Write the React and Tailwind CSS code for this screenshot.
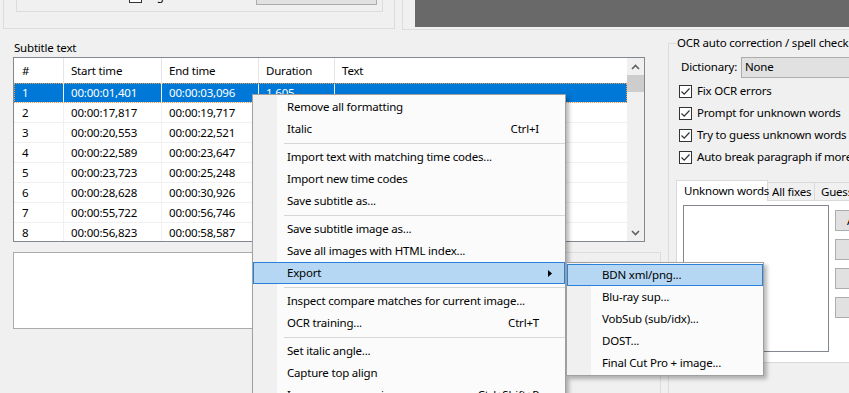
import React from "react";

const rows = [
  ["1", "00:00:01,401", "00:00:03,096", "1,605"],
  ["2", "00:00:17,817", "00:00:19,717", "1,900"],
  ["3", "00:00:20,553", "00:00:22,521", "1,968"],
  ["4", "00:00:22,589", "00:00:23,647", "1,058"],
  ["5", "00:00:23,723", "00:00:25,248", "1,525"],
  ["6", "00:00:28,628", "00:00:30,926", "2,298"],
  ["7", "00:00:55,722", "00:00:56,746", "1,024"],
  ["8", "00:00:56,823", "00:00:58,587", "1,764"],
];

const menu = [
  { label: "Remove all formatting" },
  { label: "Italic", key: "Ctrl+I" },
  { sep: true },
  { label: "Import text with matching time codes..." },
  { label: "Import new time codes" },
  { label: "Save subtitle as..." },
  { sep: true },
  { label: "Save subtitle image as..." },
  { label: "Save all images with HTML index..." },
  { label: "Export", sub: true, active: true },
  { sep: true },
  { label: "Inspect compare matches for current image..." },
  { label: "OCR training...", key: "Ctrl+T" },
  { sep: true },
  { label: "Set italic angle..." },
  { label: "Capture top align" },
  { label: "Image preprocessing...", key: "Ctrl+Shift+P" },
];

const exportMenu = [
  "BDN xml/png...",
  "Blu-ray sup...",
  "VobSub (sub/idx)...",
  "DOST...",
  "Final Cut Pro + image...",
];

const checks = [
  "Fix OCR errors",
  "Prompt for unknown words",
  "Try to guess unknown words",
  "Auto break paragraph if more than two lines",
];

function Check() {
  return (
    <div className="w-[13px] h-[13px] shrink-0 border border-[#333] bg-white flex items-center justify-center">
      <svg width="11" height="11" viewBox="0 0 11 11">
        <path d="M1.5 5.5 L4.2 8.2 L9.5 2.5" fill="none" stroke="#333" strokeWidth="1.2" />
      </svg>
    </div>
  );
}

function Chevron({ down }) {
  return (
    <div className="h-[17px] flex items-center justify-center">
      <svg width="9" height="6" viewBox="0 0 9 6">
        <path
          d={down ? "M1 1 L4.5 4.5 L8 1" : "M1 5 L4.5 1.5 L8 5"}
          fill="none"
          stroke="#606060"
          strokeWidth="1.6"
        />
      </svg>
    </div>
  );
}

export default function App() {
  const cols = ["w-[50px] pl-[8px]", "w-[98px] pl-[7px]", "w-[97px] pl-[7px]", "w-[76px] pl-[7px]"];

  return (
    <div className="relative w-[849px] h-[393px] overflow-hidden bg-[#f0f0f0] font-['Noto_Sans',sans-serif] text-[11.5px] tracking-[-0.2px] leading-[16px] text-black">
      {/* top strip, cut off */}
      <div className="flex h-[30px]">
        <div className="ml-[3px] w-[392px] h-[29px] shrink-0 border-x border-b border-[#dcdcdc]">
          <div className="ml-[12px] w-[367px] h-[12px] border-x border-b border-[#dcdcdc] flex items-end overflow-hidden">
            <div className="ml-[112px] mb-[8px] w-[13px] h-[13px] shrink-0 border border-[#333] bg-white" />
            <div className="ml-[5px] mb-[7px] whitespace-nowrap">Right to left</div>
            <div className="ml-auto mr-[5px] mb-[6px] w-[121px] h-[23px] shrink-0 border border-[#adadad] bg-[#e1e1e1]" />
          </div>
        </div>
        <div className="ml-[7px] flex-1 h-[30px] border-l border-b border-[#dcdcdc] pl-[12px]">
          <div className="h-[27px] bg-[#696969]" />
        </div>
      </div>

      <div className="flex">
        {/* left column */}
        <div className="w-[661px] shrink-0 pl-[13px]">
          <div className="mt-[10px] h-[17px] pl-[1px]">Subtitle text</div>
          <div className="w-[632px] h-[185px] border border-[#828790] bg-white flex">
            <div className="flex-1 overflow-hidden">
              <div className="flex h-[25px] items-center">
                {["#", "Start time", "End time", "Duration"].map((h, i) => (
                  <div key={h} className={`${cols[i]} h-full flex items-center border-r border-[#e5e5e5] shrink-0`}>
                    {h}
                  </div>
                ))}
                <div className="flex-1 pl-[7px]">Text</div>
              </div>
              {rows.map((r, idx) => {
                const sel = idx === 0;
                return (
                  <div
                    key={r[0]}
                    className={`flex h-[20px] border-b border-[#f0f0f0] ${
                      sel ? "bg-[#0078d7] text-white outline-1 outline-dotted outline-[#e9a15a] -outline-offset-1" : ""
                    }`}
                  >
                    {r.map((c, i) => (
                      <div key={i} className={`${cols[i]} h-full flex items-center border-r border-[#f0f0f0] shrink-0 whitespace-nowrap`}>
                        {c}
                      </div>
                    ))}
                    <div className="flex-1" />
                  </div>
                );
              })}
            </div>
            <div className="w-[17px] shrink-0 bg-[#f0f0f0] flex flex-col">
              <Chevron />
              <div className="h-[17px] bg-[#cdcdcd]" />
              <div className="flex-1" />
              <Chevron down />
            </div>
          </div>
          <div className="mt-[10px] flex">
            <div className="w-[330px] h-[77px] border border-[#ababab] bg-white" />
            <div className="flex-1 h-[150px] border-t border-r border-[#dcdcdc]" />
          </div>
        </div>

        {/* right column: OCR auto correction */}
        <div className="ml-[7px] w-[260px] shrink-0">
          <div className="relative mt-[13px] h-[400px] border-l border-t border-[#dcdcdc] pt-[13px]">
            <div className="absolute -top-[9px] left-[7px] bg-[#f0f0f0] px-[1px] whitespace-nowrap">
              OCR auto correction / spell checking
            </div>
            <div className="flex items-center h-[20px]">
              <div className="ml-[12px] w-[60px] shrink-0 whitespace-nowrap">Dictionary:</div>
              <div className="w-[180px] h-[21px] border border-[#adadad] bg-[#e1e1e1] flex items-center pl-[3px]">None</div>
            </div>
            <div className="mt-[3px]">
              {checks.map((c) => (
                <div key={c} className="flex items-center h-[22px] pl-[10px]">
                  <Check />
                  <div className="ml-[5px] whitespace-nowrap">{c}</div>
                </div>
              ))}
            </div>
            <div className="mt-[12px] ml-[7px]">
              <div className="flex items-end h-[20px] whitespace-nowrap">
                <div className="relative z-10 -mb-px h-[21px] w-[92px] shrink-0 border border-b-0 border-[#d9d9d9] bg-white pl-[7px] flex items-center">
                  Unknown words
                </div>
                <div className="h-[18px] w-[47px] shrink-0 border-t border-r border-[#d9d9d9] pl-[4px] flex items-center">All fixes</div>
                <div className="h-[18px] w-[80px] shrink-0 border-t border-r border-[#d9d9d9] pl-[6px] flex items-center">Guesses used</div>
              </div>
              <div className="h-[163px] border border-[#d9d9d9] bg-white flex pl-[6px] pt-[4px]">
                <div className="w-[146px] h-[147px] shrink-0 border border-[#828790] bg-white" />
                <div className="ml-[6px] mt-[5px] flex flex-col gap-[8px]">
                  <div className="w-[110px] h-[21px] border border-[#adadad] bg-[#e1e1e1] pl-[11px] flex items-center whitespace-nowrap">
                    Add to user dictionary
                  </div>
                  <div className="w-[110px] h-[21px] border border-[#adadad] bg-[#e1e1e1] pl-[30px] flex items-center whitespace-nowrap">
                    Add to names list
                  </div>
                  <div className="w-[110px] h-[21px] border border-[#adadad] bg-[#e1e1e1] pl-[30px] flex items-center whitespace-nowrap">
                    Add to OCR pair
                  </div>
                  <div className="w-[110px] h-[21px] border border-[#adadad] bg-[#e1e1e1] pl-[30px] flex items-center whitespace-nowrap">
                    Google it
                  </div>
                </div>
              </div>
            </div>
          </div>
        </div>
      </div>

      {/* context menu */}
      <div className="absolute left-[252px] top-[94px] w-[314px] border border-[#a0a0a0] py-[1px] bg-[linear-gradient(to_right,#f0f0f0_24px,#fbfbfb_24px)] shadow-[3px_3px_4px_rgba(0,0,0,0.28)]">
        {menu.map((m, i) =>
          m.sep ? (
            <div key={i} className="h-[6px] pt-[3px] pl-[31px]">
              <div className="h-px bg-[#d7d7d7]" />
            </div>
          ) : (
            <div
              key={i}
              className={`h-[22px] flex items-center pl-[33px] pr-[25px] border whitespace-nowrap ${
                m.active ? "border-[#2a82d8] bg-[#b5d7f3]" : "border-transparent"
              }`}
            >
              <span>{m.label}</span>
              {m.key && <span className="ml-auto">{m.key}</span>}
              {m.sub && (
                <svg className="ml-auto -mr-[13px]" width="4" height="7" viewBox="0 0 4 7">
                  <path d="M0 0 L4 3.5 L0 7 Z" fill="#000" />
                </svg>
              )}
            </div>
          )
        )}
      </div>

      {/* export submenu */}
      <div className="absolute left-[566px] top-[262px] w-[198px] border border-[#a0a0a0] py-[1px] bg-[linear-gradient(to_right,#f0f0f0_24px,#fbfbfb_24px)] shadow-[3px_3px_4px_rgba(0,0,0,0.28)]">
        {exportMenu.map((m, i) => (
          <div
            key={m}
            className={`h-[22px] flex items-center pl-[34px] border whitespace-nowrap ${
              i === 0 ? "border-[#2a82d8] bg-[#b5d7f3]" : "border-transparent"
            }`}
          >
            {m}
          </div>
        ))}
      </div>
    </div>
  );
}
